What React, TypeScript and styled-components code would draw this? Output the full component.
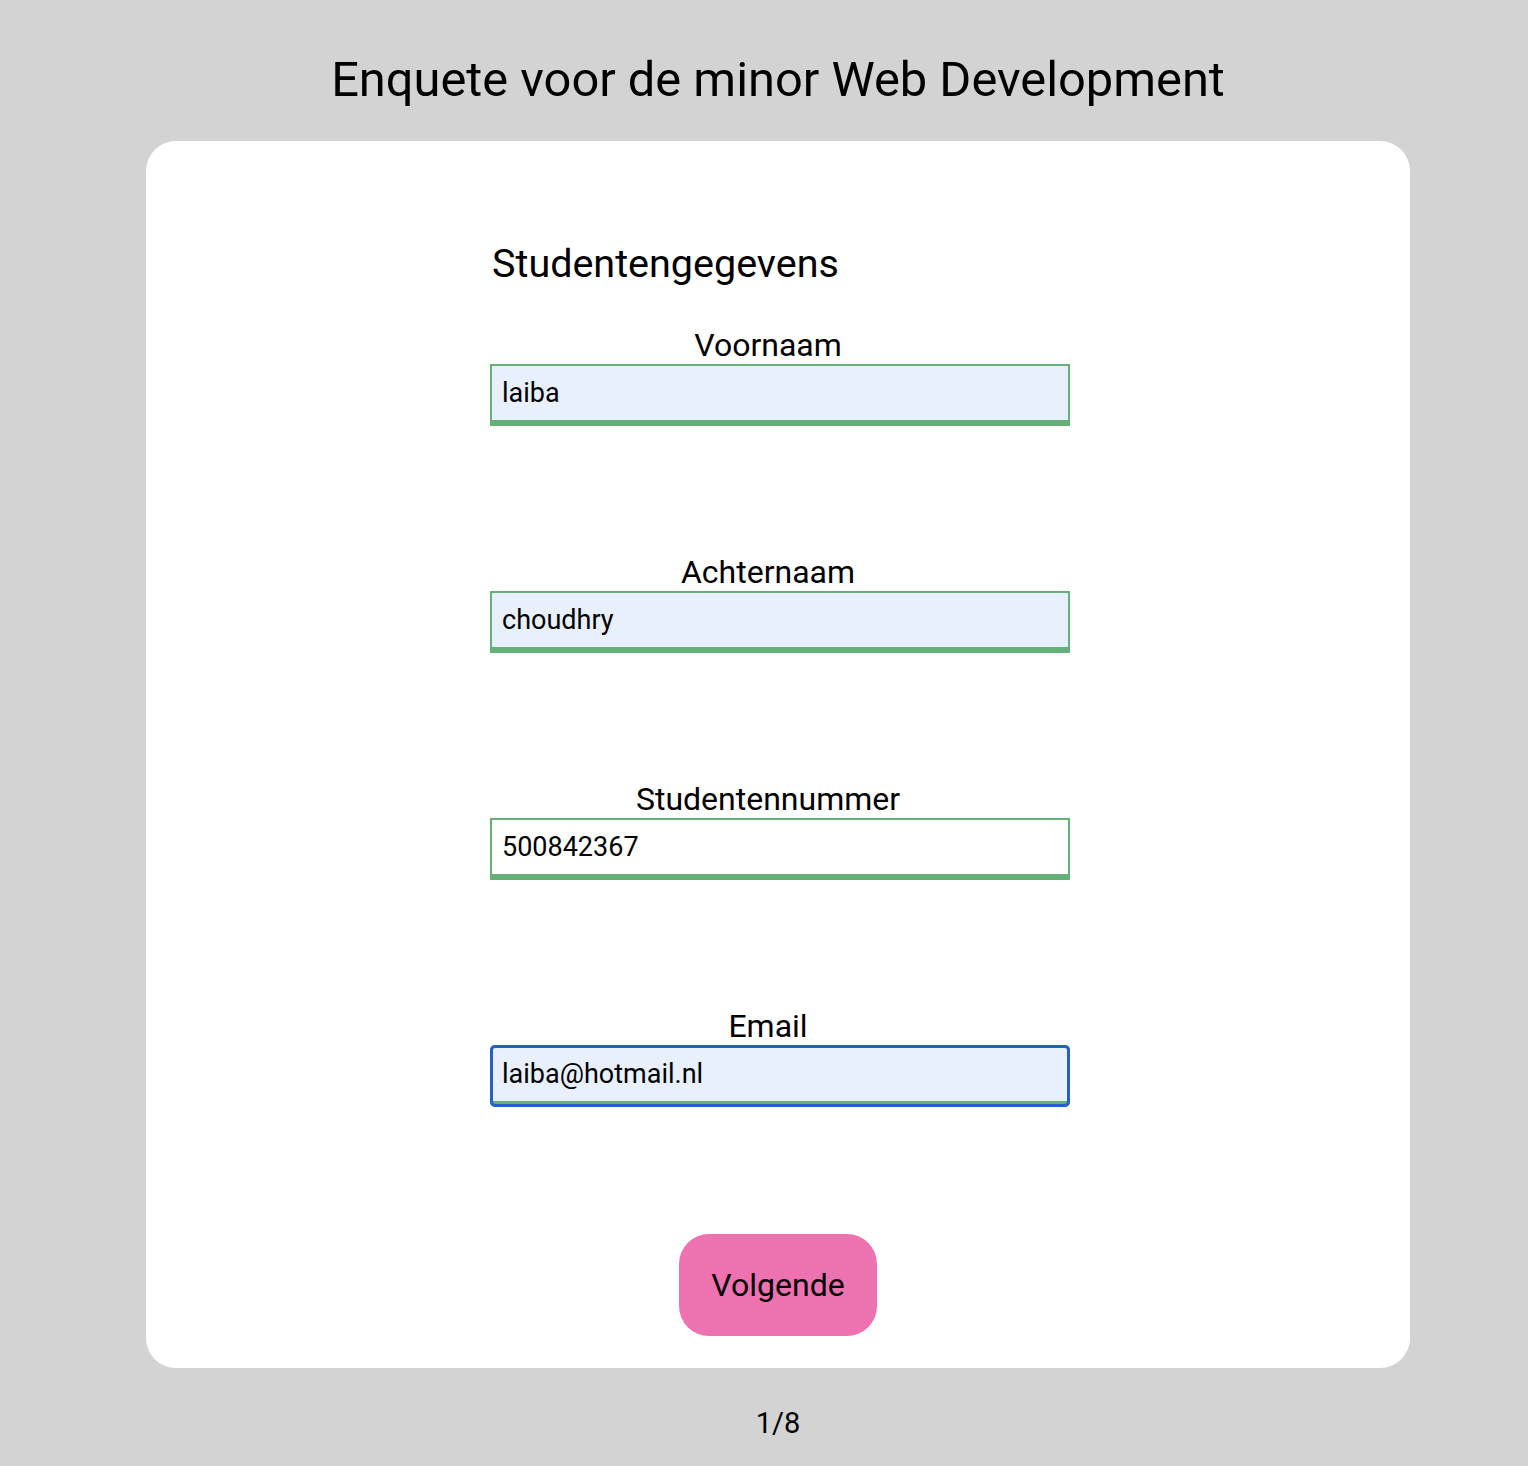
import React from 'react';
import styled, { createGlobalStyle, css } from 'styled-components';

const GlobalStyle = createGlobalStyle`
  html {
    background: #d3d3d3;
  }
  body {
    margin: 0;
    padding: 0 0 30px 28px;
    background: #d3d3d3;
    font-family: Roboto, "Liberation Sans", sans-serif;
    color: #000;
  }
`;

interface Field {
  id: string;
  label: string;
  value: string;
  autofilled: boolean;
  focused?: boolean;
}

const fields: Field[] = [
  { id: 'voornaam', label: 'Voornaam', value: 'laiba', autofilled: true },
  { id: 'achternaam', label: 'Achternaam', value: 'choudhry', autofilled: true },
  { id: 'studentennummer', label: 'Studentennummer', value: '500842367', autofilled: false },
  { id: 'email', label: 'Email', value: 'laiba@hotmail.nl', autofilled: true, focused: true },
];

const App = () => {
  return (
    <>
      <GlobalStyle />
      <Page>
        <Title>Enquete voor de minor Web Development</Title>
        <Card>
          <FormColumn>
            <SectionTitle>Studentengegevens</SectionTitle>
            {fields.map((f) => (
              <FieldGroup key={f.id}>
                <Label htmlFor={f.id}>{f.label}</Label>
                <Input
                  id={f.id}
                  type={f.id === 'email' ? 'email' : 'text'}
                  defaultValue={f.value}
                  $autofilled={f.autofilled}
                  $focused={!!f.focused}
                />
              </FieldGroup>
            ))}
          </FormColumn>
          <ButtonRow>
            <NextButton type="button">Volgende</NextButton>
          </ButtonRow>
        </Card>
        <Pager>1/8</Pager>
      </Page>
    </>
  );
};

const Page = styled.main`
  display: flex;
  flex-direction: column;
  align-items: center;
`;

const Title = styled.h1`
  margin: 52px 0 0;
  font-size: 48.8px;
  font-weight: 400;
  line-height: 56px;
  text-align: center;
`;

const Card = styled.section`
  box-sizing: border-box;
  width: 1264px;
  margin-top: 33px;
  padding: 101px 0 32px;
  background: #fff;
  border-radius: 30px;
`;

const FormColumn = styled.div`
  width: 556px;
  margin-left: calc(50% - 288px);
  display: flex;
  flex-direction: column;
  gap: 128px;
`;

const SectionTitle = styled.h2`
  margin: 0 0 -87px;
  padding-left: 2px;
  font-size: 39.5px;
  font-weight: 400;
  line-height: 44px;
`;

const FieldGroup = styled.div`
  display: flex;
  flex-direction: column;
`;

const Label = styled.label`
  display: block;
  font-size: 32px;
  line-height: 37px;
  text-align: center;
`;

const Input = styled.input<{ $autofilled: boolean; $focused: boolean }>`
  box-sizing: content-box;
  width: 100%;
  height: 54px;
  margin: 0;
  padding: 0 10px;
  border: 2px solid #65b077;
  border-bottom-width: 6px;
  border-radius: 0;
  background: ${(p) => (p.$autofilled ? '#e8f0fe' : '#fff')};
  font-family: Roboto, "Liberation Sans", sans-serif;
  font-size: 27px;
  color: #000;
  outline: none;

  ${(p) =>
    p.$focused &&
    css`
      border-radius: 5px;
      outline: 3px solid #2562c8;
      outline-offset: -3px;
    `}
`;

const ButtonRow = styled.div`
  display: flex;
  justify-content: center;
  margin-top: 127px;
`;

const NextButton = styled.button`
  padding: 32px;
  border: none;
  border-radius: 30px;
  background: #ee72b0;
  font-family: Roboto, "Liberation Sans", sans-serif;
  font-size: 32px;
  line-height: 38px;
  color: #000;
  cursor: pointer;
`;

const Pager = styled.p`
  margin: 38px 0 0;
  font-size: 29px;
  line-height: 34px;
  text-align: center;
`;

export default App;
